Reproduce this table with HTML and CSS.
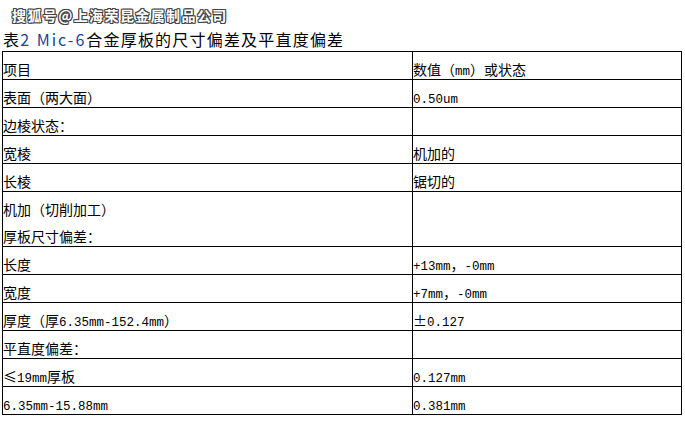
FILE: index.html
```html
<!DOCTYPE html>
<html lang="zh-CN">
<head>
<meta charset="utf-8">
<title>表2 Mic-6合金厚板的尺寸偏差及平直度偏差</title>
<link rel="stylesheet" href="styles.css">
</head>
<body>
<div class="page">
  <div class="watermark">搜狐号@上海荣昆金属制品公司</div>
  <div class="title">表<span class="blue">2 Mic-6</span>合金厚板的尺寸偏差及平直度偏差</div>
  <table class="spec">
    <colgroup><col class="c1"><col class="c2"></colgroup>
    <tr><td><div class="ln">项目</div></td><td><div class="ln">数值（<span class="lat">mm</span>）或状态</div></td></tr>
    <tr><td><div class="ln">表面（两大面）</div></td><td><div class="ln"><span class="lat">0.50um</span></div></td></tr>
    <tr><td><div class="ln">边棱状态：</div></td><td><div class="ln"></div></td></tr>
    <tr><td><div class="ln">宽棱</div></td><td><div class="ln">机加的</div></td></tr>
    <tr><td><div class="ln">长棱</div></td><td><div class="ln">锯切的</div></td></tr>
    <tr><td><div class="ln">机加（切削加工）</div><div class="ln">厚板尺寸偏差：</div></td><td></td></tr>
    <tr><td><div class="ln">长度</div></td><td><div class="ln"><span class="lat">+13mm</span>，<span class="lat">-0mm</span></div></td></tr>
    <tr><td><div class="ln">宽度</div></td><td><div class="ln"><span class="lat">+7mm</span>，<span class="lat">-0mm</span></div></td></tr>
    <tr><td><div class="ln">厚度（厚<span class="lat">6.35mm-152.4mm</span>）</div></td><td><div class="ln">±<span class="lat">0.127</span></div></td></tr>
    <tr><td><div class="ln">平直度偏差：</div></td><td><div class="ln"></div></td></tr>
    <tr><td><div class="ln"><span class="le">≤</span><span class="lat">19mm</span>厚板</div></td><td><div class="ln"><span class="lat">0.127mm</span></div></td></tr>
    <tr><td><div class="ln"><span class="lat">6.35mm-15.88mm</span></div></td><td><div class="ln"><span class="lat">0.381mm</span></div></td></tr>
  </table>
</div>
</body>
</html>
```

FILE: styles.css
```css
html, body {
  margin: 0;
  padding: 0;
  background: #ffffff;
}

.page {
  padding-left: 2px;
  font-family: "Noto Sans CJK SC", sans-serif;
  color: #000;
}

.watermark {
  height: 28px;
  line-height: 30px;
  padding-left: 10px;
  font-size: 14px;
  font-weight: bold;
  letter-spacing: 1.4px;
  color: #ffffff;
  text-shadow: 1px 0 0 #444, -1px 0 0 #444, 0 1px 0 #444, 0 -1px 0 #444, 1px 1px 0 #444, -1px -1px 0 #444, 1px -1px 0 #444, -1px 1px 0 #444;
}

.title {
  height: 23px;
  line-height: 22px;
  font-size: 16px;
  letter-spacing: 1.2px;
  padding-left: 1px;
}

.blue {
  color: #1d4296;
  letter-spacing: 2px;
}

.spec {
  border-collapse: collapse;
  width: 680px;
  table-layout: fixed;
}

.c1 { width: 410px; }

.spec td {
  border: 1px solid #000;
  padding: 0;
  vertical-align: top;
  font-size: 14px;
}

.ln {
  height: 27px;
  box-sizing: border-box;
  padding-top: 7px;
  line-height: 20px;
  white-space: nowrap;
}

.lat {
  font-family: "Liberation Mono", monospace;
  font-size: 12.5px;
}

.le {
  display: inline-block;
  width: 14px;
}
```
